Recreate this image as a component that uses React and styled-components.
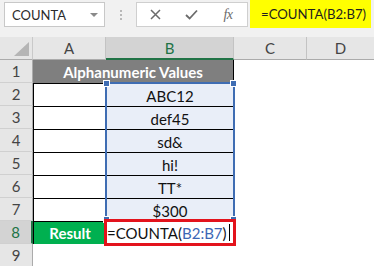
import React from "react";
import styled, { createGlobalStyle, css } from "styled-components";

const GlobalStyle = createGlobalStyle`
  html, body {
    margin: 0;
    padding: 0;
    background: #ffffff;
    font-family: Lato, "Liberation Sans", sans-serif;
    overflow: hidden;
  }
`;

const values = ["ABC12", "def45", "sd&", "hi!", "TT*", "$300"];

function App() {
  return (
    <>
      <GlobalStyle />
      <Toolbar>
        <NameBox>
          COUNTA
          <Caret />
        </NameBox>
        <Grip>
          <span />
          <span />
          <span />
        </Grip>
        <FxBox>
          <IconSlot>
            <svg width="11" height="11" viewBox="0 0 11 11">
              <path d="M1 1L10 10M10 1L1 10" stroke="#6b6b6b" strokeWidth="1.5" fill="none" />
            </svg>
          </IconSlot>
          <IconSlot>
            <svg width="13" height="11" viewBox="0 0 13 11">
              <path d="M1 6L4.6 9.5L12 1.5" stroke="#6b6b6b" strokeWidth="1.8" fill="none" />
            </svg>
          </IconSlot>
          <IconSlot>
            <Fx>fx</Fx>
          </IconSlot>
        </FxBox>
        <FormulaBox>=COUNTA(B2:B7)</FormulaBox>
      </Toolbar>

      <Sheet>
        <Corner>
          <Triangle />
        </Corner>
        <ColHeader>A</ColHeader>
        <ColHeader $active>B</ColHeader>
        <ColHeader>C</ColHeader>
        <ColHeader $last>D</ColHeader>

        <RowHeader>1</RowHeader>
        <TitleCell>Alphanumeric Values</TitleCell>
        <Blank />
        <Blank />

        {values.map((v, i) => (
          <React.Fragment key={v}>
            <RowHeader>{i + 2}</RowHeader>
            <TableCell />
            <TableCell $blue>
              {v}
              {i === 0 && (
                <RangeHighlight>
                  <Handle $top $left />
                  <Handle $top />
                  <Handle $left />
                  <Handle />
                </RangeHighlight>
              )}
            </TableCell>
            <Blank />
            <Blank />
          </React.Fragment>
        ))}

        <RowHeader $active>8</RowHeader>
        <ResultCell>Result</ResultCell>
        <EditCell>
          =COUNTA(<RefText>B2:B7</RefText>)<Cursor />
        </EditCell>
        <Blank />
        <Blank />

        <RowHeader>9</RowHeader>
        <Blank />
        <Blank />
        <Blank />
        <Blank />
      </Sheet>
    </>
  );
}

export default App;

const Toolbar = styled.div`
  height: 37px;
  display: flex;
  align-items: flex-start;
  background: #f1f1f1;
`;

const NameBox = styled.div`
  box-sizing: border-box;
  margin: 2px 0 0 4px;
  width: 101px;
  height: 25px;
  border: 1px solid #c8c8c8;
  background: #ffffff;
  display: flex;
  align-items: center;
  justify-content: space-between;
  padding: 0 6px 0 7px;
  font-size: 13px;
  color: #2b2b2b;
`;

const Caret = styled.span`
  width: 0;
  height: 0;
  border-left: 4px solid transparent;
  border-right: 4px solid transparent;
  border-top: 4px solid #8a8a8a;
`;

const Grip = styled.div`
  width: 31px;
  height: 29px;
  display: flex;
  flex-direction: column;
  align-items: center;
  justify-content: center;
  gap: 2px;
  span {
    width: 2px;
    height: 2px;
    background: #b8b8b8;
  }
`;

const FxBox = styled.div`
  box-sizing: border-box;
  margin-top: 2px;
  width: 112px;
  height: 25px;
  border: 1px solid #cfcfcf;
  background: #ffffff;
  display: grid;
  grid-template-columns: 36px 36px 38px;
  align-items: center;
`;

const IconSlot = styled.div`
  display: flex;
  justify-content: center;
  align-items: center;
`;

const Fx = styled.span`
  font-family: "Liberation Serif", serif;
  font-style: italic;
  font-size: 14px;
  color: #6b6b6b;
  letter-spacing: -0.5px;
`;

const FormulaBox = styled.div`
  box-sizing: border-box;
  margin-left: 2px;
  width: 121px;
  height: 28px;
  background: #ffff00;
  display: flex;
  align-items: center;
  padding-left: 11px;
  font-size: 13.2px;
  color: #1f1f1f;
`;

const Sheet = styled.div`
  display: grid;
  grid-template-columns: 33px 73px 128px 73px 1fr;
  grid-template-rows: repeat(10, 23px);
  font-size: 15px;
  color: #111111;
`;

const headerBase = css`
  box-sizing: border-box;
  display: flex;
  align-items: center;
  justify-content: center;
  background: #e6e6e6;
  color: #444444;
`;

const Corner = styled.div`
  ${headerBase};
  position: relative;
  border-right: 1px solid #c9c9c9;
  border-bottom: 1px solid #ababab;
`;

const Triangle = styled.span`
  position: absolute;
  right: 3px;
  bottom: 3px;
  width: 0;
  height: 0;
  border-left: 15px solid transparent;
  border-bottom: 14px solid #b5b5b5;
`;

const ColHeader = styled.div`
  ${headerBase};
  border-right: ${(p) => (p.$last ? "none" : "1px solid #c3c3c3")};
  border-bottom: ${(p) => (p.$active ? "2px solid #217346" : "1px solid #ababab")};
  ${(p) =>
    p.$active &&
    css`
      background: #d3d3d3;
      color: #217346;
    `}
`;

const RowHeader = styled.div`
  ${headerBase};
  border-bottom: 1px solid #d0d0d0;
  border-right: ${(p) => (p.$active ? "2px solid #217346" : "1px solid #ababab")};
  ${(p) =>
    p.$active &&
    css`
      background: #d3d3d3;
      color: #217346;
    `}
`;

const Blank = styled.div`
  background: #ffffff;
`;

const TitleCell = styled.div`
  grid-column: 2 / 4;
  box-sizing: border-box;
  background: #7f7f7f;
  color: #ffffff;
  font-weight: 700;
  display: flex;
  align-items: center;
  justify-content: center;
  border-right: 1px solid #000000;
`;

const TableCell = styled.div`
  position: relative;
  box-sizing: border-box;
  background: ${(p) => (p.$blue ? "#e9eef8" : "#ffffff")};
  border-top: 1px solid #000000;
  border-left: 1px solid #000000;
  border-right: ${(p) => (p.$blue ? "1px solid #000000" : "none")};
  display: flex;
  align-items: center;
  justify-content: center;
  padding-top: 1px;
`;

const ResultCell = styled.div`
  box-sizing: border-box;
  background: #00b050;
  color: #ffffff;
  font-weight: 700;
  border-top: 1px solid #000000;
  border-left: 1px solid #000000;
  display: flex;
  align-items: center;
  justify-content: center;
`;

const EditCell = styled.div`
  position: relative;
  z-index: 3;
  background: #ffffff;
  display: flex;
  align-items: center;
  padding-left: 1px;
  white-space: nowrap;
  color: #111111;
  &::after {
    content: "";
    position: absolute;
    inset: -2px;
    border: 3px solid #e3131c;
  }
`;

const RefText = styled.span`
  color: #3c66b5;
`;

const Cursor = styled.span`
  display: inline-block;
  width: 1px;
  height: 17px;
  margin-left: 2px;
  background: #000000;
`;

const RangeHighlight = styled.div`
  position: absolute;
  z-index: 2;
  top: -2px;
  left: -2px;
  width: 130px;
  height: 139px;
  box-sizing: border-box;
  border: 2px solid #3f6db3;
  pointer-events: none;
`;

const Handle = styled.span`
  position: absolute;
  width: 5px;
  height: 5px;
  background: #3f6db3;
  outline: 1px solid #ffffff;
  ${(p) => (p.$top ? "top: -3px;" : "bottom: -3px;")}
  ${(p) => (p.$left ? "left: -3px;" : "right: -3px;")}
`;
